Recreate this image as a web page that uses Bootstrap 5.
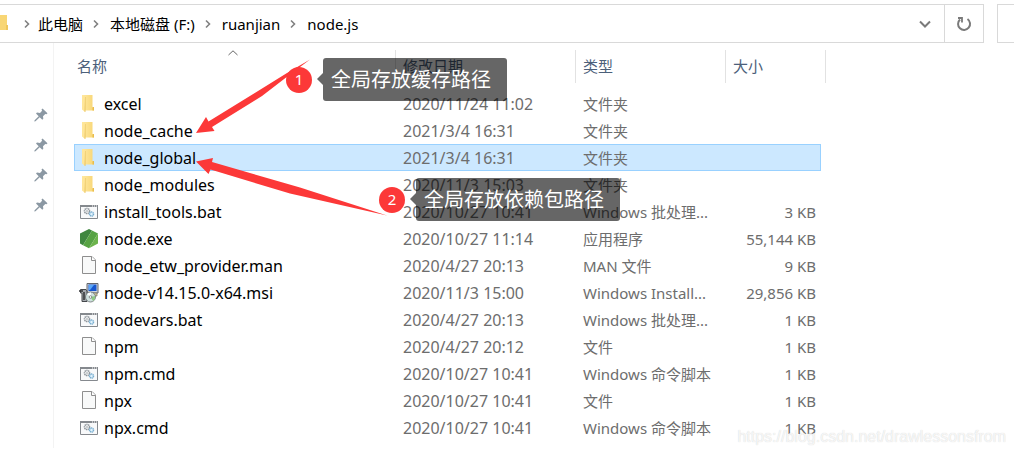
<!DOCTYPE html>
<html lang="zh-CN">
<head>
<meta charset="utf-8">
<meta name="viewport" content="width=device-width, initial-scale=1">
<title>node.js</title>
<link href="https://cdn.jsdelivr.net/npm/bootstrap@5.3.0/dist/css/bootstrap.min.css" rel="stylesheet">
<style>
  body { font-family: "Noto Sans", "Noto Sans CJK SC", sans-serif; font-size: 15px; line-height: 20px; color: #000; background: #fff; }
  svg { display: block; flex: none; }
  .topbar { gap: 13px; padding-top: 4px; }
  .address { border: 1px solid #d9d9d9; border-left: 0; height: 39px; }
  .address a { color: #000; text-decoration: none; }
  .crumb { display: flex; align-items: center; }
  .crumb svg { margin: 0 11px 0 10px; }
  .tool { border: 0; background: none; padding: 0; width: 38px; height: 37px; display: flex; align-items: center; justify-content: center; }
  .tool + .tool { border-left: 1px solid #d9d9d9; width: 39px; }
  .find { width: 17px; border: 1px solid #d9d9d9; border-right: 0; height: 39px; padding: 0; border-radius: 0; }
  .pins { width: 54px; border-right: 1px solid #f3f3f3; padding-top: 57px; min-height: calc(100vh - 50px); }
  .pins li { height: 30px; padding: 8px 0 0 34px; }
  .files { width: 747px; table-layout: fixed; border-collapse: separate; border-spacing: 0; margin: 7px 0 0 20px; }
  .files th { height: 33px; padding: 0 0 2px 7px; font-weight: 400; color: #4c607a; border-right: 1px solid #e2e2e2; position: relative; }
  .files th:first-child { padding-left: 3px; }
  .files th:last-child { border-right: 0; }
  .files th:last-child::after { content: ""; position: absolute; right: -5px; top: 0; bottom: 0; border-right: 1px solid #e2e2e2; }
  .files thead::after { content: ""; display: block; height: 7px; }
  .files td { height: 27px; padding: 0 0 0 7px; color: #6d6d6d; white-space: nowrap; border: 0 solid #99d1ff; }
  .files td.num { text-align: right; padding: 0 5px 0 0; }
  .files td:nth-child(2) { font-size: 16px; }
  .files td:first-child { color: #000; padding-left: 5px; font-size: 16px; }
  .files .picked td { background: #cce8ff; border-width: 1px 0; }
  .files .picked td:first-child { border-left-width: 1px; padding-left: 4px; }
  .files .picked td:last-child { border-right-width: 1px; }
  .entry { display: flex; align-items: center; gap: 5px; }
  .entry svg { width: 20px; height: 20px; }
  .sorted { position: absolute; left: 154px; top: 0; }
  .notes { position: absolute; inset: 0; pointer-events: none; }
  .note { position: absolute; display: flex; align-items: center; gap: 11px; color: #fff; }
  .note-one { left: 286px; top: 58px; }
  .note-two { left: 379px; top: 178px; }
  .dot { width: 26px; height: 26px; border-radius: 50%; background: #fc3838; text-align: center; line-height: 24px; }
  .tip { position: relative; background: rgba(0,0,0,.6); border-radius: 3px; padding: 0 16px 0 8px; font-size: 20px; line-height: 43px; white-space: nowrap; }
  .tip::before { content: ""; position: absolute; left: -6px; top: 15px; border: solid transparent; border-width: 6px 6px 6px 0; border-right-color: rgba(0,0,0,.6); }
  .watermark { position: absolute; right: 8px; top: 427px; font-family: "Liberation Sans", sans-serif; font-size: 16px; color: rgba(255,255,255,.8); text-shadow: 0 0 1px rgba(0,0,0,.2); white-space: nowrap; }
</style>
</head>
<body class="position-relative overflow-x-hidden">
<svg width="0" height="0" class="position-absolute" aria-hidden="true">
  <defs>
    <linearGradient id="gold"><stop offset="0" stop-color="#ffe9a2"/><stop offset="1" stop-color="#f8d675"/></linearGradient>
    <symbol id="folder" viewBox="0 0 20 20">
      <path d="M3 1H13.500V13.500H15V16.500H5Z" fill="url(#gold)"/>
      <path d="M13.500 13H15v3.500h-1.500z" fill="#e9bd4c"/>
      <path d="M3 1L6 3V18L3 15.500Z" fill="#ffe699"/>
      <path d="M6 3L6.500 3.500V18L5.500 17.500Z" fill="#e8c25f"/>
    </symbol>
    <symbol id="script" viewBox="0 0 20 20">
      <path d="M1.500 3.500H18.500V16.500H1.500Z" fill="#f8f9fa" stroke="#85898e"/>
      <path d="M1 3H19V5H1Z" fill="#85898e"/>
      <path d="M13 4h1m1 0h1m1 0h1" stroke="#fff"/>
      <circle cx="8" cy="9" r="2.500" fill="none" stroke="#8f969c" stroke-width="1.600" stroke-dasharray="1.300 .5"/>
      <circle cx="8" cy="9" r=".8" fill="#8f969c"/>
      <circle cx="12.500" cy="12" r="2" fill="#e2f3fd" stroke="#79aed0" stroke-width="1.500" stroke-dasharray="1.200 .4"/>
    </symbol>
    <symbol id="page" viewBox="0 0 20 20">
      <path d="M3.500 .5H13L16.500 4V17.500H3.500Z" fill="#f8f9f9" stroke="#8e8e8e"/>
      <path d="M12.500 .5V4.500H16.500" fill="#fff" stroke="#8e8e8e"/>
    </symbol>
    <symbol id="node" viewBox="0 0 20 20">
      <path d="M10 0L1 4.500V14.500L4 16.200L13 1.500Z" fill="#3f873f"/>
      <path d="M13 1.500L4 16.200 10 19.200 19 4.500Z" fill="#57a344"/>
      <path d="M19 4.500L10 19.200 19 14.500Z" fill="#6cb44c"/>
    </symbol>
    <symbol id="setup" viewBox="0 0 20 20">
      <path d="M8 .5H19V10H8Z" fill="#ced4dd" stroke="#62666d"/>
      <path d="M9.500 1.500H17.500V8H9.500Z" fill="#1757cf"/>
      <path d="M10 2H15L11 7H10Z" fill="#59a7f8"/>
      <path d="M11 10H18V13H12Z" fill="#d4c99f" stroke="#73715e" stroke-width=".7"/>
      <path d="M1.500 6.500H7L8 8V18.500H3V10H1.500Z" fill="#a4a8ad" stroke="#44474b"/>
      <path d="M0 8H4M5 9V17" stroke="#303236" stroke-width="1.500"/>
      <circle cx="11.500" cy="14" r="5" fill="#cfe0df" stroke="#696f71" stroke-width=".8"/>
      <path d="M11.500 14L8 11A5 5 0 0 1 12 9.500Z" fill="#fff"/>
      <path d="M11.500 14L16 13A5 5 0 0 1 14 18Z" fill="#8dca83"/>
      <circle cx="11.500" cy="14" r="1.300" fill="#fff" stroke="#66696c" stroke-width=".7"/>
    </symbol>
    <symbol id="pin" viewBox="0 0 14 14">
      <path d="M8.500 .5L13.500 5.300 12.500 6.300 11.300 6 9 8.300 9.300 10.800 8.300 11.800 5.700 9.300 1.500 13.200 .3 13.500 .6 12.300 4.700 8.300 2 5.500 3 4.500 6 5 8.100 2.800 7.500 1.500Z" fill="#8b98a3"/>
    </symbol>
    <symbol id="next" viewBox="0 0 6 10"><path d="M1 1.500L4.500 5 1 8.500" fill="none" stroke="#808080" stroke-width="1.600"/></symbol>
  </defs>
</svg>

<header class="topbar d-flex">
  <div class="address d-flex flex-grow-1 align-items-center">
    <svg width="8" height="20" aria-hidden="true"><path d="M0 1H7V12H8V16H0Z" fill="#f8d675"/><path d="M6 11H8V16H6Z" fill="#efc65b"/></svg>
    <nav class="flex-grow-1" aria-label="路径">
      <ol class="list-unstyled d-flex mb-0">
        <li class="crumb"><svg width="6" height="10" class="ms-3 me-2"><use href="#next"/></svg><a href="#">此电脑</a></li>
        <li class="crumb"><svg width="6" height="10"><use href="#next"/></svg><a href="#">本地磁盘 (F:)</a></li>
        <li class="crumb"><svg width="6" height="10"><use href="#next"/></svg><a href="#">ruanjian</a></li>
        <li class="crumb"><svg width="6" height="10"><use href="#next"/></svg><a href="#">node.js</a></li>
      </ol>
    </nav>
    <button class="tool" type="button" aria-label="历史"><svg width="12" height="8"><path d="M1 1.500L6 6.500 11 1.500" fill="none" stroke="#7a7a7a" stroke-width="2"/></svg></button>
    <button class="tool" type="button" aria-label="刷新"><svg width="16" height="16"><path d="M11.500 3A6 6 0 1 1 4 3.500" fill="none" stroke="#7a7a7a" stroke-width="2"/><path d="M2 2H6V6.500" fill="none" stroke="#7a7a7a" stroke-width="1.800"/></svg></button>
  </div>
  <input class="find" type="search" aria-label="搜索">
</header>

<main class="d-flex">
  <ul class="pins list-unstyled mb-0 flex-shrink-0">
    <li><svg width="14" height="14"><use href="#pin"/></svg></li>
    <li><svg width="14" height="14"><use href="#pin"/></svg></li>
    <li><svg width="14" height="14"><use href="#pin"/></svg></li>
    <li><svg width="14" height="14"><use href="#pin"/></svg></li>
  </ul>
  <div>
  <table class="files">
    <colgroup><col style="width:322px"><col style="width:180px"><col style="width:150px"><col></colgroup>
    <thead>
      <tr><th scope="col">名称<svg class="sorted" width="10" height="6"><path d="M.5 5L5 .8 9.500 5" fill="none" stroke="#666"/></svg></th><th scope="col">修改日期</th><th scope="col">类型</th><th scope="col">大小</th></tr>
    </thead>
    <tbody>
      <tr><td><div class="entry"><svg><use href="#folder"/></svg>excel</div></td><td>2020/11/24 11:02</td><td>文件夹</td><td class="num"></td></tr>
      <tr><td><div class="entry"><svg><use href="#folder"/></svg>node_cache</div></td><td>2021/3/4 16:31</td><td>文件夹</td><td class="num"></td></tr>
      <tr class="picked"><td><div class="entry"><svg><use href="#folder"/></svg>node_global</div></td><td>2021/3/4 16:31</td><td>文件夹</td><td class="num"></td></tr>
      <tr><td><div class="entry"><svg><use href="#folder"/></svg>node_modules</div></td><td>2020/11/3 15:03</td><td>文件夹</td><td class="num"></td></tr>
      <tr><td><div class="entry"><svg><use href="#script"/></svg>install_tools.bat</div></td><td>2020/10/27 10:41</td><td>Windows 批处理...</td><td class="num">3 KB</td></tr>
      <tr><td><div class="entry"><svg><use href="#node"/></svg>node.exe</div></td><td>2020/10/27 11:14</td><td>应用程序</td><td class="num">55,144 KB</td></tr>
      <tr><td><div class="entry"><svg><use href="#page"/></svg>node_etw_provider.man</div></td><td>2020/4/27 20:13</td><td>MAN 文件</td><td class="num">9 KB</td></tr>
      <tr><td><div class="entry"><svg><use href="#setup"/></svg>node-v14.15.0-x64.msi</div></td><td>2020/11/3 15:00</td><td>Windows Install...</td><td class="num">29,856 KB</td></tr>
      <tr><td><div class="entry"><svg><use href="#script"/></svg>nodevars.bat</div></td><td>2020/4/27 20:13</td><td>Windows 批处理...</td><td class="num">1 KB</td></tr>
      <tr><td><div class="entry"><svg><use href="#page"/></svg>npm</div></td><td>2020/4/27 20:12</td><td>文件</td><td class="num">1 KB</td></tr>
      <tr><td><div class="entry"><svg><use href="#script"/></svg>npm.cmd</div></td><td>2020/10/27 10:41</td><td>Windows 命令脚本</td><td class="num">1 KB</td></tr>
      <tr><td><div class="entry"><svg><use href="#page"/></svg>npx</div></td><td>2020/10/27 10:41</td><td>文件</td><td class="num">1 KB</td></tr>
      <tr><td><div class="entry"><svg><use href="#script"/></svg>npx.cmd</div></td><td>2020/10/27 10:41</td><td>Windows 命令脚本</td><td class="num">1 KB</td></tr>
    </tbody>
  </table>
  </div>
</main>

<div class="notes">
  <svg width="400" height="230" aria-hidden="true" fill="#fc3838">
    <path d="M196 133L206 117 208.500 121.500L287 73 310 59.500 288 76 262 96 212 127 214.500 131Z"/>
    <path d="M196 161.500L213 158 212 162 300 187.500 387 215.500 290 193.500 210.500 169.500 208.500 174Z"/>
  </svg>
  <div class="note note-one"><span class="dot">1</span><span class="tip">全局存放缓存路径</span></div>
  <div class="note note-two"><span class="dot">2</span><span class="tip">全局存放依赖包路径</span></div>
</div>
<div class="watermark">https://blog.csdn.net/drawlessonsfrom</div>
<script src="https://cdn.jsdelivr.net/npm/bootstrap@5.3.0/dist/js/bootstrap.bundle.min.js"></script>
</body>
</html>
